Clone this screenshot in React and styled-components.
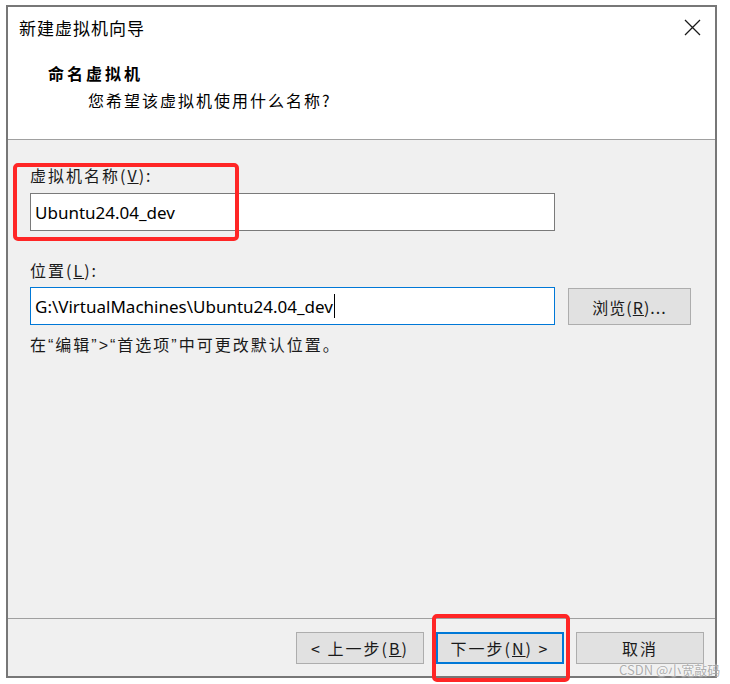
import styled, { createGlobalStyle } from 'styled-components';

const GlobalStyle = createGlobalStyle`
  html, body {
    margin: 0;
    padding: 0;
    background: #ffffff;
  }
  body {
    font-family: "Noto Sans CJK SC", "Noto Sans", sans-serif;
    color: #111;
  }
`;

const Page = styled.div`
  position: relative;
  width: 730px;
  height: 684px;
  padding: 5px 0 0 6px;
  box-sizing: border-box;
  overflow: hidden;
`;

const Window = styled.div`
  width: 711px;
  height: 673px;
  box-sizing: border-box;
  border: 2px solid #777777;
  background: #f0f0f0;
  display: flex;
  flex-direction: column;
`;

const Header = styled.div`
  height: 133px;
  box-sizing: border-box;
  background: #ffffff;
  border-bottom: 1px solid #a0a0a0;
`;

const TitleRow = styled.div`
  height: 40px;
  display: flex;
  align-items: center;
  justify-content: space-between;
  padding-left: 11px;
`;

const Title = styled.div`
  font-size: 17px;
  letter-spacing: 1px;
  color: #000;
`;

const CloseButton = styled.div`
  width: 30px;
  height: 30px;
  margin-right: 8px;
  display: flex;
  align-items: center;
  justify-content: center;
`;

const Heading = styled.div`
  margin: 16px 0 0 40px;
  font-size: 16px;
  font-weight: 700;
  line-height: 20px;
  letter-spacing: 3px;
  color: #000;
`;

const Subheading = styled.div`
  margin: 7px 0 0 80px;
  font-size: 16px;
  line-height: 20px;
  letter-spacing: 2px;
  color: #000;
`;

const Body = styled.div`
  flex: 1;
  padding: 25px 0 0 22px;
`;

const Label = styled.div`
  margin-top: ${p => p.$gap || 0}px;
  font-size: 16px;
  line-height: 20px;
  letter-spacing: 2px;
  color: #1a1a1a;
`;

const Field = styled.div`
  width: 525px;
  height: 38px;
  box-sizing: border-box;
  margin-top: ${p => p.$gap || 0}px;
  border: 1px solid ${p => (p.$focused ? '#0078d7' : '#7a7a7a')};
  background: #ffffff;
  display: flex;
  align-items: center;
  padding-left: 4px;
  font-family: "Noto Sans", "Open Sans", sans-serif;
  font-size: 17px;
  color: #000;
`;

const Caret = styled.span`
  display: inline-block;
  width: 1px;
  height: 24px;
  margin-left: 1px;
  background: #000;
`;

const Row = styled.div`
  margin-top: 7px;
  display: flex;
  align-items: flex-start;
  gap: 13px;
`;

const BrowseButton = styled.div`
  width: 123px;
  height: 37px;
  margin-top: 1px;
  box-sizing: border-box;
  background: #e1e1e1;
  border: 1px solid #adadad;
  display: flex;
  align-items: center;
  justify-content: center;
  font-size: 16px;
  letter-spacing: 1px;
  color: #1a1a1a;
`;

const Hint = styled.div`
  margin-top: 11px;
  font-family: "Liberation Sans", "Noto Sans CJK SC", sans-serif;
  font-size: 16px;
  line-height: 20px;
  letter-spacing: 2px;
  color: #1a1a1a;
`;

const Footer = styled.div`
  height: 58px;
  box-sizing: border-box;
  border-top: 1px solid #a0a0a0;
  display: flex;
  justify-content: flex-end;
  align-items: flex-start;
  gap: 12px;
  padding: 13px 11px 0 0;
`;

const FooterButton = styled.div`
  width: 128px;
  height: 32px;
  box-sizing: border-box;
  background: #e1e1e1;
  border: ${p => (p.$primary ? '2px solid #0078d7' : '1px solid #adadad')};
  display: flex;
  align-items: center;
  justify-content: center;
  font-size: 16px;
  letter-spacing: 2px;
  color: #1a1a1a;
`;

const Highlight = styled.div`
  position: absolute;
  left: ${p => p.$x}px;
  top: ${p => p.$y}px;
  width: ${p => p.$w}px;
  height: ${p => p.$h}px;
  box-sizing: border-box;
  border: 4px solid #ff2626;
  border-radius: 5px;
  pointer-events: none;
`;

const Watermark = styled.div`
  position: absolute;
  left: 619px;
  top: 661px;
  font-family: "Noto Sans CJK SC", sans-serif;
  font-size: 13px;
  line-height: 18px;
  color: rgba(160, 160, 160, 0.85);
  text-shadow: 0 0 2px #ffffff;
  white-space: nowrap;
`;

function CloseIcon() {
  return (
    <svg width="17" height="17" viewBox="0 0 17 17">
      <path d="M1 1 L16 16 M16 1 L1 16" stroke="#1a1a1a" strokeWidth="1.3" fill="none" />
    </svg>
  );
}

export default function App() {
  return (
    <Page>
      <GlobalStyle />
      <Window>
        <Header>
          <TitleRow>
            <Title>新建虚拟机向导</Title>
            <CloseButton><CloseIcon /></CloseButton>
          </TitleRow>
          <Heading>命名虚拟机</Heading>
          <Subheading>您希望该虚拟机使用什么名称?</Subheading>
        </Header>
        <Body>
          <Label>虚拟机名称(<u>V</u>):</Label>
          <Field $gap={8}>Ubuntu24.04_dev</Field>
          <Label $gap={29}>位置(<u>L</u>):</Label>
          <Row>
            <Field $focused>G:\VirtualMachines\Ubuntu24.04_dev<Caret /></Field>
            <BrowseButton>浏览(<u>R</u>)...</BrowseButton>
          </Row>
          <Hint>在“编辑”&gt;“首选项”中可更改默认位置。</Hint>
        </Body>
        <Footer>
          <FooterButton>&lt; 上一步(<u>B</u>)</FooterButton>
          <FooterButton $primary>下一步(<u>N</u>) &gt;</FooterButton>
          <FooterButton>取消</FooterButton>
        </Footer>
      </Window>
      <Highlight $x={13} $y={163} $w={226} $h={78} />
      <Highlight $x={432} $y={614} $w={138} $h={68} />
      <Watermark>CSDN @小宽敲码</Watermark>
    </Page>
  );
}
